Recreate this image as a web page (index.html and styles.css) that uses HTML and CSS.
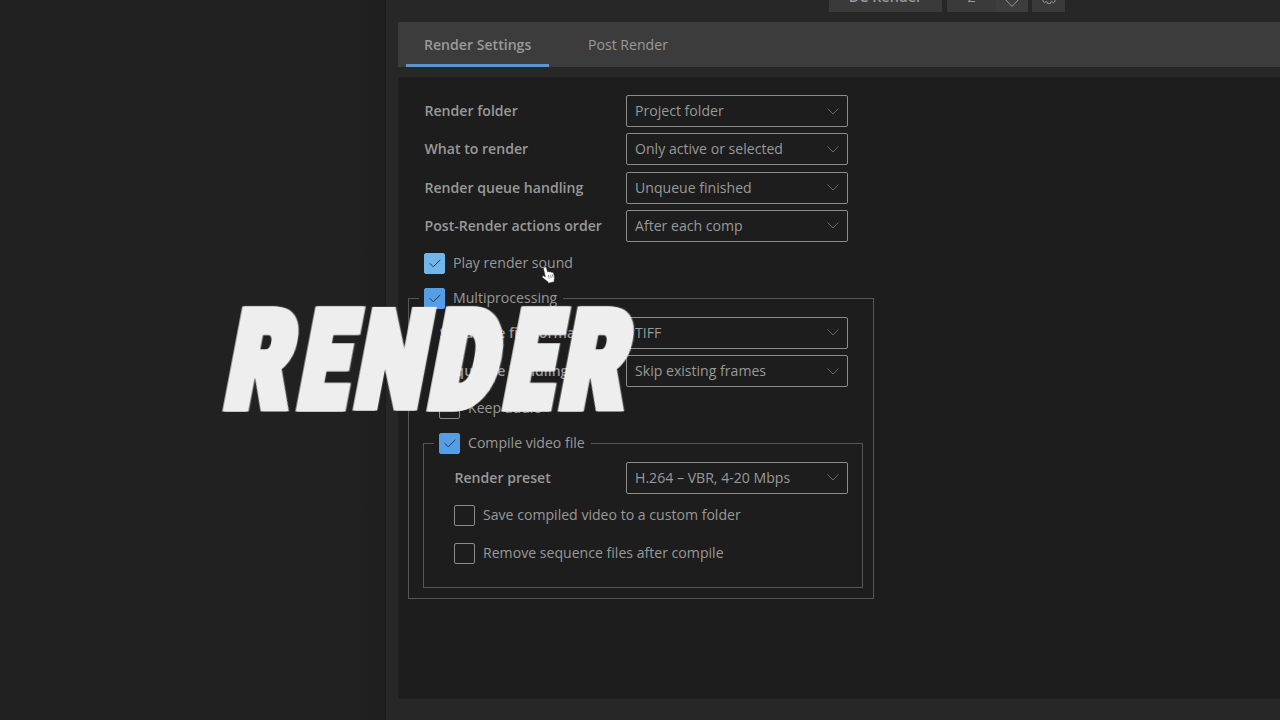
FILE: index.html
```html
<!DOCTYPE html>
<html lang="en">
<head>
    <meta charset="UTF-8">
    <meta name="viewport" content="width=device-width, initial-scale=1.0">
    <title>Render Settings</title>
    <link rel="stylesheet" href="styles.css">
</head>
<body>
    <svg class="symbols">
        <symbol id="arrow" viewBox="0 0 12 7"><path d="M.5 .5 6 6 11.5 .5"/></symbol>
        <symbol id="check" viewBox="0 0 12 9"><path d="M.7 4.3 4.2 7.8 11.3 .9"/></symbol>
    </svg>

    <div class="screen">
        <div class="backdrop"></div>
        <main class="window">
            <div class="toolbar">
                <div class="tool tool-render">DC Render</div>
                <div class="tool tool-count">
                    <span class="count">2</span>
                    <span class="drop"><svg width="18" height="24" viewBox="0 0 18 24"><path d="M1 14 9 22.500 17 14"/></svg></span>
                </div>
                <div class="tool tool-gear">
                    <svg width="16" height="16" viewBox="0 0 16 16"><circle cx="8" cy="8" r="2.600"/><path d="M6.700 1h2.600l.4 1.900 1.200.5 1.600-1.100 1.800 1.800-1.100 1.600.5 1.200 1.900.4v2.400l-1.900.4-.5 1.200 1.100 1.600-1.800 1.800-1.600-1.100-1.200.5-.4 1.500H6.700l-.4-1.500-1.200-.5-1.600 1.100-1.800-1.800 1.100-1.600-.5-1.200-1.900-.4V7.300l1.900-.4.5-1.200-1.100-1.600 1.800-1.800 1.600 1.100 1.200-.5z"/></svg>
                </div>
            </div>

            <nav class="tabs">
                <a class="tab active">Render Settings</a>
                <a class="tab">Post Render</a>
            </nav>

            <section class="content">
                <form class="form">
                    <div class="row">
                        <label>Render folder</label>
                        <div class="select">Project folder<svg><use href="#arrow"/></svg></div>
                    </div>
                    <div class="row">
                        <label>What to render</label>
                        <div class="select">Only active or selected<svg><use href="#arrow"/></svg></div>
                    </div>
                    <div class="row">
                        <label>Render queue handling</label>
                        <div class="select">Unqueue finished<svg><use href="#arrow"/></svg></div>
                    </div>
                    <div class="row">
                        <label>Post-Render actions order</label>
                        <div class="select">After each comp<svg><use href="#arrow"/></svg></div>
                    </div>
                    <div class="option sound">
                        <span class="box checked hover"><svg><use href="#check"/></svg></span>Play render sound
                        <svg class="cursor" viewBox="0 0 14 17"><path d="M3.200 1.200c1-.5 1.700.1 2 1l1 3.300c.7-.6 1.500-.4 1.900.2.700-.5 1.500-.3 1.900.4.800-.3 1.600 0 1.900 1l.8 3c.3 1.400-.2 2.200-.4 3.200l.2 1.500-5.500 1.400-.7-1.300C4.800 13.800 3 12.400 1.400 10.900c-1-1.100.2-2.200 1.400-1.500l1.200.8L2.300 2.800c-.2-.7.200-1.300.9-1.600z"/><path class="fingers" d="M6.800 8.500l.8 3.200M8.800 8.200l.8 3M10.700 7.900l.7 2.800"/></svg>
                    </div>

                    <fieldset class="multi">
                        <legend class="option"><span class="box checked"><svg><use href="#check"/></svg></span>Multiprocessing</legend>
                        <div class="row">
                            <label>Sequence file format</label>
                            <div class="select">TIFF<svg><use href="#arrow"/></svg></div>
                        </div>
                        <div class="row">
                            <label>Sequence handling</label>
                            <div class="select">Skip existing frames<svg><use href="#arrow"/></svg></div>
                        </div>
                        <div class="option audio"><span class="box"></span>Keep audio</div>

                        <fieldset class="compile">
                            <legend class="option"><span class="box checked"><svg><use href="#check"/></svg></span>Compile video file</legend>
                            <div class="row">
                                <label>Render preset</label>
                                <div class="select">H.264 – VBR, 4-20 Mbps<svg><use href="#arrow"/></svg></div>
                            </div>
                            <div class="option custom"><span class="box"></span>Save compiled video to a custom folder</div>
                            <div class="option remove"><span class="box"></span>Remove sequence files after compile</div>
                        </fieldset>
                    </fieldset>
                </form>
            </section>
        </main>

        <!-- big slanted title over the window -->
        <svg class="title" viewBox="0 0 1280 720">
            <g transform="translate(222 411) skewX(-10.8) scale(.71 1)">
                <text y="-5"><tspan x="-1">R</tspan><tspan x="102" textLength="66" lengthAdjust="spacingAndGlyphs">E</tspan><tspan class="thin" x="181">N</tspan><tspan x="286" textLength="90" lengthAdjust="spacingAndGlyphs">D</tspan><tspan x="392" textLength="66" lengthAdjust="spacingAndGlyphs">E</tspan><tspan x="471">R</tspan></text>
            </g>
        </svg>
    </div>
</body>
</html>
```

FILE: styles.css
```css
* {
    box-sizing: border-box;
}
body {
    margin: 0;
    background: #212121;
    color: #999;
    font-family: "Open Sans", sans-serif;
    font-size: 14.1px;
    line-height: 20px;
}
svg {
    fill: none;
    stroke: currentColor;
}
.symbols {
    display: none;
}
.screen {
    position: relative;
    display: flex;
    width: 1280px;
    height: 720px;
    overflow: hidden;
}
.backdrop {
    width: 386px;
    background: linear-gradient(90deg, #212121 92%, #1e1e1e);
    border-right: 1px solid #1a1a1a;
}
.window {
    flex: 1;
    padding-left: 12px;
    background: #272727;
}

/* toolbar, cut off by the top edge */
.toolbar {
    display: flex;
    align-items: flex-end;
    height: 22px;
    padding: 0 0 10px 431px;
    overflow: hidden;
}
.tool {
    display: flex;
    flex: none;
    align-items: center;
    justify-content: center;
    height: 32px;
    background: #3a3a3a;
}
.tool-render {
    width: 113px;
    margin-right: 5px;
    padding-top: 2px;
    font-size: 14.4px;
    font-weight: 600;
}
.tool-count {
    width: 81px;
    margin-right: 4px;
}
.count {
    width: 49px;
    padding-top: 1px;
    text-align: center;
}
.drop {
    display: flex;
    align-items: center;
    justify-content: center;
    width: 32px;
    height: 32px;
    background: #3d3d3d;
}
.tool-gear {
    width: 33px;
}

.tabs {
    display: flex;
    height: 45px;
    padding-left: 8px;
    background: #3c3c3c;
}
.tab {
    padding: 12.5px 18px 9.5px;
    border-bottom: 3px solid transparent;
    white-space: nowrap;
}
.tab.active {
    width: 143px;
    margin-right: 21px;
    border-bottom-color: #5a96cb;
    font-weight: 600;
}

.content {
    height: 622px;
    margin-top: 10px;
    padding: 18px 0 0 26px;
    background: #1d1d1d;
}
.form {
    width: 424px;
}
.row {
    display: flex;
    align-items: center;
    justify-content: space-between;
    height: 32px;
    margin-bottom: 6.3px;
}
.row label {
    padding-left: .5px;
    font-weight: 600;
}
.select {
    display: flex;
    align-items: center;
    justify-content: space-between;
    width: 222px;
    height: 32px;
    padding: 0 8px;
    border: 1px solid #8c8c8c;
    border-radius: 2px;
}
.select svg {
    width: 12px;
    height: 7px;
    color: #666;
}

.option {
    display: flex;
    align-items: center;
    height: 21px;
}
.box {
    display: flex;
    align-items: center;
    justify-content: center;
    width: 21px;
    height: 21px;
    margin-right: 8px;
    border: 1px solid #8c8c8c;
    border-radius: 2px;
}
.box.checked {
    background: #559ee3;
    border-color: #559ee3;
    color: #1d3650;
}
.box.hover {
    background: #72b5eb;
    border-color: #72b5eb;
}
.box svg {
    width: 12px;
    height: 9px;
}
.sound {
    position: relative;
    margin: 11px 0 14px;
}
.cursor {
    position: absolute;
    left: 117px;
    top: 13px;
    width: 15px;
    height: 18px;
    fill: #fff;
    stroke: #222;
    stroke-width: .5;
}

fieldset {
    min-width: 0;
    border: 1px solid #565656;
}
legend {
    margin-left: -20px;
    padding: 0 6px 0 5px;
}
.multi {
    height: 311px;
    margin: 0 -26px 0 -16px;
    padding: 8px 25px 0 30px;
}
.audio {
    margin-top: 10.5px;
}
.compile {
    height: 155px;
    margin: 14px -15px 0 -16px;
    padding: 8px 14px 0 30px;
}
.custom {
    margin-top: 11px;
}
.remove {
    margin-top: 17px;
}

.title {
    position: absolute;
    inset: 0;
    width: 1280px;
    height: 720px;
}
.title text {
    fill: #eee;
    stroke: #eee;
    stroke-width: 11;
    font-family: Roboto, sans-serif;
    font-size: 133px;
    font-weight: 900;
    filter: drop-shadow(3px 0 0 #eee);
}
.title .thin {
    stroke-width: 9;
}
```
